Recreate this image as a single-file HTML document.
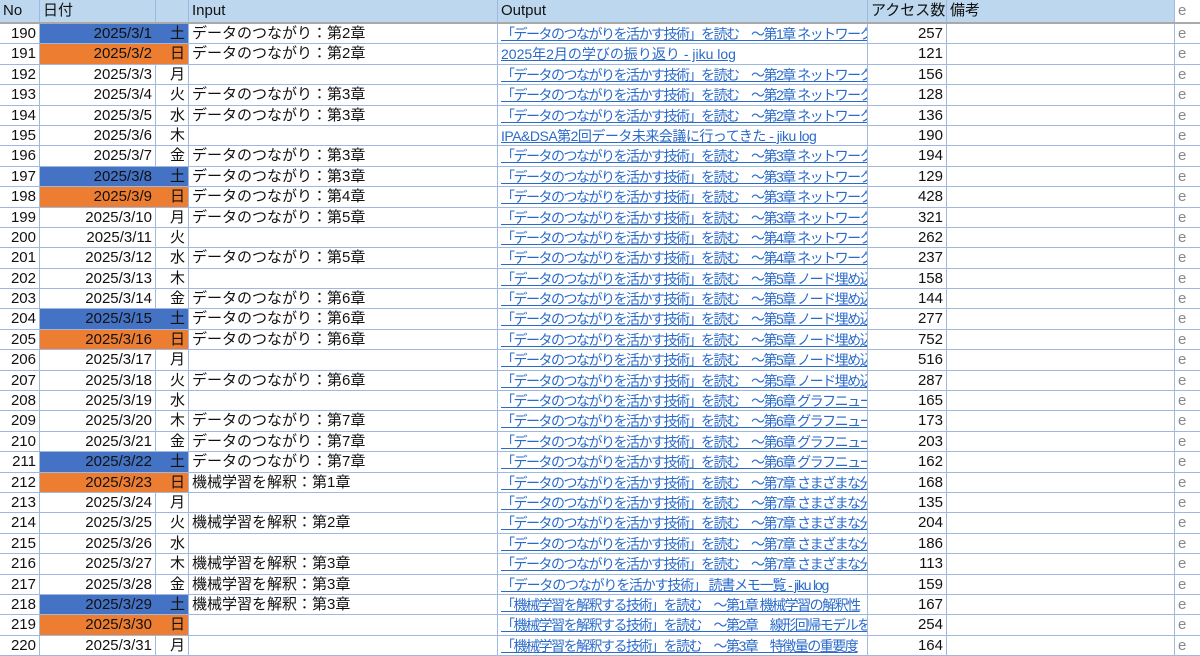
<!DOCTYPE html>
<html><head><meta charset="utf-8"><style>
*{margin:0;padding:0;box-sizing:border-box}
body{width:1200px;height:656px;overflow:hidden;background:#fff;font-family:"Liberation Sans","Noto Sans CJK JP",sans-serif;font-size:15px;color:#111}
.r{display:flex;height:20.4px;line-height:20px;border-bottom:1px solid #9fb8e0;white-space:nowrap}
.h{height:24px;line-height:22px;background:#bdd7ee;border-bottom:2px solid #a9a9a9}
.r>div{overflow:hidden;border-right:1px solid #9fb8e0;padding:0 3px}
.c1{width:40px;text-align:right}
.c2{width:116px;text-align:right}
.c3{width:33px;text-align:right}
.c4{width:309px}
.c5{width:370px;color:#2a6acb;text-decoration:underline;font-size:14px}
.k{letter-spacing:-1.5px}
.c6{width:79px;text-align:right}
.c7{width:228px}
.c8{flex:1;color:#888;border-right:none!important}
.h>div{text-align:left}
.h .c8{background:#fff}
.b .c2,.b .c3{background:#4472c4;border-right-color:#4472c4}
.o .c2,.o .c3{background:#ed7d31;border-right-color:#ed7d31}
.b .c3,.o .c3{border-right-color:#9fb8e0}
</style></head><body>
<div class="r h"><div class="c1">No</div><div class="c2">日付</div><div class="c3"></div><div class="c4">Input</div><div class="c5" style="color:#111;text-decoration:none;font-size:15px">Output</div><div class="c6" style="text-align:left">アクセス数</div><div class="c7">備考</div><div class="c8">e</div></div>
<div class="r b"><div class="c1">190</div><div class="c2">2025/3/1</div><div class="c3">土</div><div class="c4">データのつながり：第2章</div><div class="c5 k">「データのつながりを活かす技術」を読む　～第1章 ネットワークデータ</div><div class="c6">257</div><div class="c7"></div><div class="c8">e</div></div>
<div class="r o"><div class="c1">191</div><div class="c2">2025/3/2</div><div class="c3">日</div><div class="c4">データのつながり：第2章</div><div class="c5">2025年2月の学びの振り返り - jiku log</div><div class="c6">121</div><div class="c7"></div><div class="c8">e</div></div>
<div class="r"><div class="c1">192</div><div class="c2">2025/3/3</div><div class="c3">月</div><div class="c4"></div><div class="c5 k">「データのつながりを活かす技術」を読む　～第2章 ネットワークデータ</div><div class="c6">156</div><div class="c7"></div><div class="c8">e</div></div>
<div class="r"><div class="c1">193</div><div class="c2">2025/3/4</div><div class="c3">火</div><div class="c4">データのつながり：第3章</div><div class="c5 k">「データのつながりを活かす技術」を読む　～第2章 ネットワークデータ</div><div class="c6">128</div><div class="c7"></div><div class="c8">e</div></div>
<div class="r"><div class="c1">194</div><div class="c2">2025/3/5</div><div class="c3">水</div><div class="c4">データのつながり：第3章</div><div class="c5 k">「データのつながりを活かす技術」を読む　～第2章 ネットワークデータ</div><div class="c6">136</div><div class="c7"></div><div class="c8">e</div></div>
<div class="r"><div class="c1">195</div><div class="c2">2025/3/6</div><div class="c3">木</div><div class="c4"></div><div class="c5" style="letter-spacing:-0.5px">IPA&amp;DSA第2回データ未来会議に行ってきた - jiku log</div><div class="c6">190</div><div class="c7"></div><div class="c8">e</div></div>
<div class="r"><div class="c1">196</div><div class="c2">2025/3/7</div><div class="c3">金</div><div class="c4">データのつながり：第3章</div><div class="c5 k">「データのつながりを活かす技術」を読む　～第3章 ネットワークの性質</div><div class="c6">194</div><div class="c7"></div><div class="c8">e</div></div>
<div class="r b"><div class="c1">197</div><div class="c2">2025/3/8</div><div class="c3">土</div><div class="c4">データのつながり：第3章</div><div class="c5 k">「データのつながりを活かす技術」を読む　～第3章 ネットワークの性質</div><div class="c6">129</div><div class="c7"></div><div class="c8">e</div></div>
<div class="r o"><div class="c1">198</div><div class="c2">2025/3/9</div><div class="c3">日</div><div class="c4">データのつながり：第4章</div><div class="c5 k">「データのつながりを活かす技術」を読む　～第3章 ネットワークの性質</div><div class="c6">428</div><div class="c7"></div><div class="c8">e</div></div>
<div class="r"><div class="c1">199</div><div class="c2">2025/3/10</div><div class="c3">月</div><div class="c4">データのつながり：第5章</div><div class="c5 k">「データのつながりを活かす技術」を読む　～第3章 ネットワークの性質</div><div class="c6">321</div><div class="c7"></div><div class="c8">e</div></div>
<div class="r"><div class="c1">200</div><div class="c2">2025/3/11</div><div class="c3">火</div><div class="c4"></div><div class="c5 k">「データのつながりを活かす技術」を読む　～第4章 ネットワークの構造</div><div class="c6">262</div><div class="c7"></div><div class="c8">e</div></div>
<div class="r"><div class="c1">201</div><div class="c2">2025/3/12</div><div class="c3">水</div><div class="c4">データのつながり：第5章</div><div class="c5 k">「データのつながりを活かす技術」を読む　～第4章 ネットワークの構造</div><div class="c6">237</div><div class="c7"></div><div class="c8">e</div></div>
<div class="r"><div class="c1">202</div><div class="c2">2025/3/13</div><div class="c3">木</div><div class="c4"></div><div class="c5 k">「データのつながりを活かす技術」を読む　～第5章 ノード埋め込み</div><div class="c6">158</div><div class="c7"></div><div class="c8">e</div></div>
<div class="r"><div class="c1">203</div><div class="c2">2025/3/14</div><div class="c3">金</div><div class="c4">データのつながり：第6章</div><div class="c5 k">「データのつながりを活かす技術」を読む　～第5章 ノード埋め込み</div><div class="c6">144</div><div class="c7"></div><div class="c8">e</div></div>
<div class="r b"><div class="c1">204</div><div class="c2">2025/3/15</div><div class="c3">土</div><div class="c4">データのつながり：第6章</div><div class="c5 k">「データのつながりを活かす技術」を読む　～第5章 ノード埋め込み</div><div class="c6">277</div><div class="c7"></div><div class="c8">e</div></div>
<div class="r o"><div class="c1">205</div><div class="c2">2025/3/16</div><div class="c3">日</div><div class="c4">データのつながり：第6章</div><div class="c5 k">「データのつながりを活かす技術」を読む　～第5章 ノード埋め込み</div><div class="c6">752</div><div class="c7"></div><div class="c8">e</div></div>
<div class="r"><div class="c1">206</div><div class="c2">2025/3/17</div><div class="c3">月</div><div class="c4"></div><div class="c5 k">「データのつながりを活かす技術」を読む　～第5章 ノード埋め込み</div><div class="c6">516</div><div class="c7"></div><div class="c8">e</div></div>
<div class="r"><div class="c1">207</div><div class="c2">2025/3/18</div><div class="c3">火</div><div class="c4">データのつながり：第6章</div><div class="c5 k">「データのつながりを活かす技術」を読む　～第5章 ノード埋め込み</div><div class="c6">287</div><div class="c7"></div><div class="c8">e</div></div>
<div class="r"><div class="c1">208</div><div class="c2">2025/3/19</div><div class="c3">水</div><div class="c4"></div><div class="c5 k">「データのつながりを活かす技術」を読む　～第6章 グラフニューラル</div><div class="c6">165</div><div class="c7"></div><div class="c8">e</div></div>
<div class="r"><div class="c1">209</div><div class="c2">2025/3/20</div><div class="c3">木</div><div class="c4">データのつながり：第7章</div><div class="c5 k">「データのつながりを活かす技術」を読む　～第6章 グラフニューラル</div><div class="c6">173</div><div class="c7"></div><div class="c8">e</div></div>
<div class="r"><div class="c1">210</div><div class="c2">2025/3/21</div><div class="c3">金</div><div class="c4">データのつながり：第7章</div><div class="c5 k">「データのつながりを活かす技術」を読む　～第6章 グラフニューラル</div><div class="c6">203</div><div class="c7"></div><div class="c8">e</div></div>
<div class="r b"><div class="c1">211</div><div class="c2">2025/3/22</div><div class="c3">土</div><div class="c4">データのつながり：第7章</div><div class="c5 k">「データのつながりを活かす技術」を読む　～第6章 グラフニューラル</div><div class="c6">162</div><div class="c7"></div><div class="c8">e</div></div>
<div class="r o"><div class="c1">212</div><div class="c2">2025/3/23</div><div class="c3">日</div><div class="c4">機械学習を解釈：第1章</div><div class="c5 k">「データのつながりを活かす技術」を読む　～第7章 さまざまな分野</div><div class="c6">168</div><div class="c7"></div><div class="c8">e</div></div>
<div class="r"><div class="c1">213</div><div class="c2">2025/3/24</div><div class="c3">月</div><div class="c4"></div><div class="c5 k">「データのつながりを活かす技術」を読む　～第7章 さまざまな分野</div><div class="c6">135</div><div class="c7"></div><div class="c8">e</div></div>
<div class="r"><div class="c1">214</div><div class="c2">2025/3/25</div><div class="c3">火</div><div class="c4">機械学習を解釈：第2章</div><div class="c5 k">「データのつながりを活かす技術」を読む　～第7章 さまざまな分野</div><div class="c6">204</div><div class="c7"></div><div class="c8">e</div></div>
<div class="r"><div class="c1">215</div><div class="c2">2025/3/26</div><div class="c3">水</div><div class="c4"></div><div class="c5 k">「データのつながりを活かす技術」を読む　～第7章 さまざまな分野</div><div class="c6">186</div><div class="c7"></div><div class="c8">e</div></div>
<div class="r"><div class="c1">216</div><div class="c2">2025/3/27</div><div class="c3">木</div><div class="c4">機械学習を解釈：第3章</div><div class="c5 k">「データのつながりを活かす技術」を読む　～第7章 さまざまな分野</div><div class="c6">113</div><div class="c7"></div><div class="c8">e</div></div>
<div class="r"><div class="c1">217</div><div class="c2">2025/3/28</div><div class="c3">金</div><div class="c4">機械学習を解釈：第3章</div><div class="c5" style="letter-spacing:-1.2px">「データのつながりを活かす技術」 読書メモ一覧 - jiku log</div><div class="c6">159</div><div class="c7"></div><div class="c8">e</div></div>
<div class="r b"><div class="c1">218</div><div class="c2">2025/3/29</div><div class="c3">土</div><div class="c4">機械学習を解釈：第3章</div><div class="c5 k">「機械学習を解釈する技術」を読む　～第1章 機械学習の解釈性</div><div class="c6">167</div><div class="c7"></div><div class="c8">e</div></div>
<div class="r o"><div class="c1">219</div><div class="c2">2025/3/30</div><div class="c3">日</div><div class="c4"></div><div class="c5 k">「機械学習を解釈する技術」を読む　～第2章　線形回帰モデルを</div><div class="c6">254</div><div class="c7"></div><div class="c8">e</div></div>
<div class="r"><div class="c1">220</div><div class="c2">2025/3/31</div><div class="c3">月</div><div class="c4"></div><div class="c5 k">「機械学習を解釈する技術」を読む　～第3章　特徴量の重要度</div><div class="c6">164</div><div class="c7"></div><div class="c8">e</div></div>
</body></html>
